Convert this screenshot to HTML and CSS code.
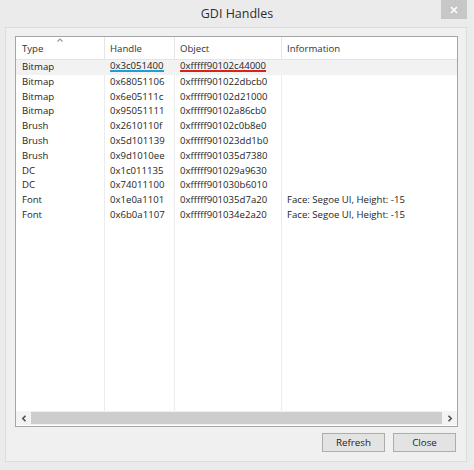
FILE: index.html
```html
<!DOCTYPE html>
<html>
<head>
<meta charset="utf-8">
<title>GDI Handles</title>
<link rel="stylesheet" href="styles.css">
</head>
<body>
<div class="window">
  <div class="titlebar">
    <div></div>
    <div class="title">GDI Handles</div>
    <div class="close-btn">
      <svg width="8" height="8" viewBox="0 0 8 8"><path d="M1 1L7 7M7 1L1 7" stroke="#fff" stroke-width="1.6" fill="none"/></svg>
    </div>
  </div>
  <div class="frame">
    <div class="client">
      <div class="list">
        <div class="header">
          <div class="hcell type">Type<span class="sort"><svg width="6" height="4" viewBox="0 0 6 4"><path d="M0.5 3.5L3 1L5.5 3.5" stroke="#8a9bb0" stroke-width="1.2" fill="none"/></svg></span></div>
          <div class="hcell">Handle</div>
          <div class="hcell">Object</div>
          <div class="hcell last">Information</div>
        </div>
        <div class="body">
          <div class="row sel"><div class="c1">Bitmap</div><div class="c"><span class="mark blue">0x3c051400</span></div><div class="c"><span class="mark red">0xfffff90102c44000</span></div><div class="c"></div></div>
          <div class="row"><div class="c1">Bitmap</div><div class="c">0x68051106</div><div class="c">0xfffff901022dbcb0</div><div class="c"></div></div>
          <div class="row"><div class="c1">Bitmap</div><div class="c">0x6e05111c</div><div class="c">0xfffff90102d21000</div><div class="c"></div></div>
          <div class="row"><div class="c1">Bitmap</div><div class="c">0x95051111</div><div class="c">0xfffff90102a86cb0</div><div class="c"></div></div>
          <div class="row"><div class="c1">Brush</div><div class="c">0x2610110f</div><div class="c">0xfffff90102c0b8e0</div><div class="c"></div></div>
          <div class="row"><div class="c1">Brush</div><div class="c">0x5d101139</div><div class="c">0xfffff901023dd1b0</div><div class="c"></div></div>
          <div class="row"><div class="c1">Brush</div><div class="c">0x9d1010ee</div><div class="c">0xfffff901035d7380</div><div class="c"></div></div>
          <div class="row"><div class="c1">DC</div><div class="c">0x1c011135</div><div class="c">0xfffff901029a9630</div><div class="c"></div></div>
          <div class="row"><div class="c1">DC</div><div class="c">0x74011100</div><div class="c">0xfffff901030b6010</div><div class="c"></div></div>
          <div class="row"><div class="c1">Font</div><div class="c">0x1e0a1101</div><div class="c">0xfffff901035d7a20</div><div class="c">Face: Segoe UI, Height: -15</div></div>
          <div class="row"><div class="c1">Font</div><div class="c">0x6b0a1107</div><div class="c">0xfffff901034e2a20</div><div class="c">Face: Segoe UI, Height: -15</div></div>
        </div>
        <div class="hscroll">
          <div class="arrow">
            <svg width="6" height="7" viewBox="0 0 6 7"><path d="M4.5 0.8L1.8 3.5L4.5 6.2" stroke="#505050" stroke-width="1.6" fill="none"/></svg>
          </div>
          <div class="thumb"></div>
          <div class="arrow">
            <svg width="6" height="7" viewBox="0 0 6 7"><path d="M1.5 0.8L4.2 3.5L1.5 6.2" stroke="#505050" stroke-width="1.6" fill="none"/></svg>
          </div>
        </div>
      </div>
      <div class="buttons">
        <div class="btn">Refresh</div>
        <div class="btn">Close</div>
      </div>
    </div>
  </div>
</div>
</body>
</html>
```

FILE: styles.css
```css
* { box-sizing: border-box; }
html, body { margin: 0; padding: 0; }
body {
  background: #ebebeb;
  font-family: "Open Sans", "Noto Sans", sans-serif;
  color: #1e1e1e;
}
.window {
  width: 474px;
  height: 470px;
  display: flex;
  flex-direction: column;
  background: #ebebeb;
}
.titlebar {
  height: 27px;
  display: grid;
  grid-template-columns: 1fr auto 1fr;
  padding-right: 7px;
}
.title {
  font-size: 12.5px;
  color: #2e2e2e;
  line-height: 27px;
  padding-left: 7px;
}
.close-btn {
  justify-self: end;
  width: 26px;
  height: 19px;
  background: #c7c7c7;
  display: flex;
  align-items: center;
  justify-content: center;
}
.frame {
  flex: 1;
  display: flex;
  padding: 0 7px 8px 5px;
}
.client {
  flex: 1;
  background: #f0f0f0;
  border: 1px solid #dcdcdc;
  padding: 8px 8px 9px 9px;
  display: flex;
  flex-direction: column;
}
.list {
  height: 391px;
  border: 1px solid #a5a5a5;
  background: #fff;
  display: flex;
  flex-direction: column;
  font-size: 9.6px;
}
.header {
  height: 23px;
  flex: none;
  display: grid;
  grid-template-columns: 89px 70px 107px 1fr;
  border-bottom: 1px solid #e5e5e5;
  color: #333;
}
.hcell {
  border-right: 1px solid #e5e5e5;
  padding-left: 5px;
  display: flex;
  align-items: center;
  padding-top: 1px;
}
.hcell.type { padding-left: 6px; position: relative; }
.hcell.last { border-right: none; }
.sort {
  position: absolute;
  left: 41px;
  top: 1px;
  line-height: 0;
}
.body {
  flex: 1;
  background:
    linear-gradient(#ececec, #ececec) 88px 0 / 1px 100% no-repeat,
    linear-gradient(#ececec, #ececec) 158px 0 / 1px 100% no-repeat,
    linear-gradient(#ececec, #ececec) 265px 0 / 1px 100% no-repeat,
    #fff;
}
.row {
  height: 14.8px;
  line-height: 14.8px;
  display: grid;
  grid-template-columns: 89px 70px 107px 1fr;
  white-space: nowrap;
}
.row.sel { background: #f2f2f2; }
.c1 { padding-left: 6px; }
.c { padding-left: 5px; }
.mark {
  display: inline-block;
  line-height: 8px;
  vertical-align: middle;
  border-bottom: 2px solid;
}
.mark.blue { border-color: #1e9fdc; }
.mark.red { border-color: #d8231b; }
.hscroll {
  height: 14px;
  flex: none;
  margin-bottom: 1px;
  display: flex;
  background: #f0f0f0;
}
.arrow {
  width: 15px;
  display: flex;
  align-items: center;
  justify-content: center;
  background: #f3f3f3;
}
.thumb {
  flex: 1;
  background: #cdcdcd;
  margin: 1px 0;
}
.buttons {
  display: flex;
  justify-content: flex-end;
  gap: 8px;
  padding-top: 6px;
  padding-right: 2px;
}
.btn {
  width: 63px;
  height: 19px;
  background: #e3e3e3;
  border: 1px solid #adadad;
  font-size: 9.8px;
  display: flex;
  align-items: center;
  justify-content: center;
  color: #1e1e1e;
}
```
